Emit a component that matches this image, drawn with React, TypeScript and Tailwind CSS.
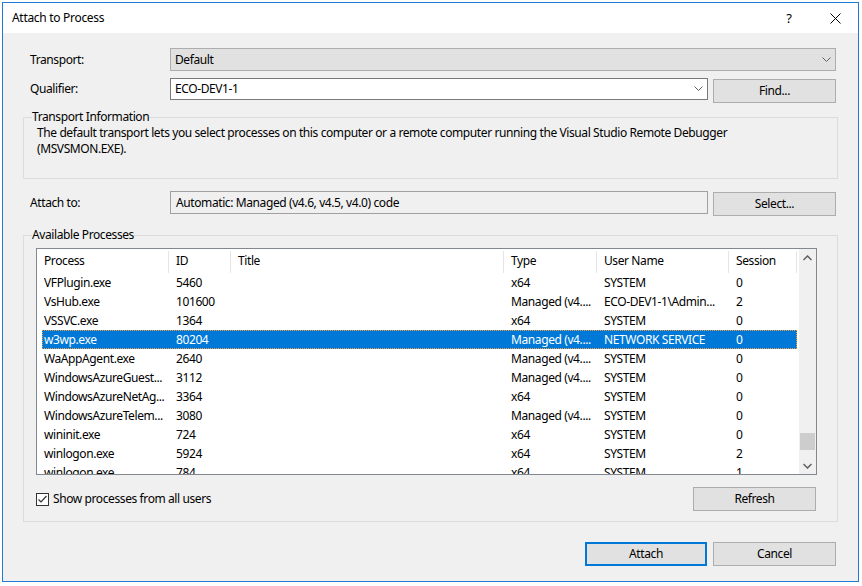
import React from 'react';

// Attach to Process dialog, Windows 10 look.

type Row = { proc: string; id: string; type: string; user: string; session: string; selected?: boolean };

const rows: Row[] = [
  { proc: 'VFPlugin.exe', id: '5460', type: 'x64', user: 'SYSTEM', session: '0' },
  { proc: 'VsHub.exe', id: '101600', type: 'Managed (v4....', user: 'ECO-DEV1-1\\Admin...', session: '2' },
  { proc: 'VSSVC.exe', id: '1364', type: 'x64', user: 'SYSTEM', session: '0' },
  { proc: 'w3wp.exe', id: '80204', type: 'Managed (v4....', user: 'NETWORK SERVICE', session: '0', selected: true },
  { proc: 'WaAppAgent.exe', id: '2640', type: 'Managed (v4....', user: 'SYSTEM', session: '0' },
  { proc: 'WindowsAzureGuest...', id: '3112', type: 'Managed (v4....', user: 'SYSTEM', session: '0' },
  { proc: 'WindowsAzureNetAg...', id: '3364', type: 'x64', user: 'SYSTEM', session: '0' },
  { proc: 'WindowsAzureTelem...', id: '3080', type: 'Managed (v4....', user: 'SYSTEM', session: '0' },
  { proc: 'wininit.exe', id: '724', type: 'x64', user: 'SYSTEM', session: '0' },
  { proc: 'winlogon.exe', id: '5924', type: 'x64', user: 'SYSTEM', session: '2' },
  // partly hidden below the list edge, as in the real dialog
  { proc: 'winlogon.exe', id: '784', type: 'x64', user: 'SYSTEM', session: '1' },
];

function Chevron({ className }: { className?: string }) {
  return (
    <svg width="9" height="6" viewBox="0 0 9 6" className={className}>
      <polyline points="0.5,0.5 4.5,4.5 8.5,0.5" fill="none" stroke="#606060" strokeWidth="1" />
    </svg>
  );
}

function Button({ children, className = '' }: { children: React.ReactNode; className?: string }) {
  return (
    <div
      className={`flex items-center justify-center h-[24px] w-[123px] bg-[#e1e1e1] border border-[#adadad] ${className}`}
    >
      {children}
    </div>
  );
}

function HeaderCell({ w, label }: { w: string; label: string }) {
  return (
    <div className={`${w} h-full flex items-center pl-[7px] relative`}>
      <span>{label}</span>
      <div className="absolute right-0 top-[2px] bottom-0 w-px bg-[#e5e5e5]" />
    </div>
  );
}

export default function App() {
  return (
    <div
      className="w-[862px] h-[586px] bg-white overflow-hidden text-[12px] text-black leading-[16px]"
      style={{ fontFamily: '"Segoe UI", "Noto Sans", sans-serif' }}
    >
      <div className="ml-[2px] mt-[2px] w-[857px] h-[580px] border border-[#1e7bd1] flex flex-col">
        {/* title bar */}
        <div className="h-[30px] bg-white flex items-center pl-[9px] shrink-0">
          <span className="tracking-[-0.3px]">Attach to Process</span>
          <span className="ml-auto mr-[38px] text-[13px]">?</span>
          <svg width="11" height="11" viewBox="0 0 11 11" className="mr-[17px]">
            <path d="M0.5 0.5 L10.5 10.5 M10.5 0.5 L0.5 10.5" stroke="#000" strokeWidth="1" />
          </svg>
        </div>

        <div className="flex-1 bg-[#f0f0f0] px-[20px] tracking-[-0.4px]">
          {/* Transport */}
          <div className="mt-[15px] flex items-center h-[23px]">
            <div className="w-[147px] pl-[7px]">Transport:</div>
            <div className="w-[666px] h-[23px] bg-[#e1e1e1] border border-[#adadad] flex items-center pl-[4px]">
              <span>Default</span>
              <Chevron className="ml-auto mr-[4px]" />
            </div>
          </div>

          {/* Qualifier */}
          <div className="mt-[7px] flex items-start h-[25px]">
            <div className="w-[147px] pl-[7px] h-[22px] flex items-center">Qualifier:</div>
            <div className="w-[538px] h-[22px] bg-white border border-[#7a7a7a] flex items-center pl-[4px]">
              <span>ECO-DEV1-1</span>
              <Chevron className="ml-auto mr-[4px]" />
            </div>
            <Button className="ml-[5px] mt-[1px]">Find...</Button>
          </div>

          {/* Transport Information */}
          <fieldset className="mt-[6px] border border-[#dcdcdc] px-[8px] pb-[21px]">
            <legend className="leading-[16px]">Transport Information</legend>
            <div className="pl-[5px]">
              The default transport lets you select processes on this computer or a remote computer running the Visual
              Studio Remote Debugger
              <br />
              (MSVSMON.EXE).
            </div>
          </fieldset>

          {/* Attach to */}
          <div className="mt-[12px] flex items-start h-[25px]">
            <div className="w-[147px] pl-[7px] h-[23px] flex items-center">Attach to:</div>
            <div className="w-[538px] h-[23px] bg-[#f0f0f0] border border-[#a0a0a0] flex items-center pl-[5px]">
              Automatic: Managed (v4.6, v4.5, v4.0) code
            </div>
            <Button className="ml-[5px] mt-[1px]">Select...</Button>
          </div>

          {/* Available Processes */}
          <fieldset className="mt-[11px] border border-[#dcdcdc] px-[8px] pb-[10px]">
            <legend className="leading-[16px]">Available Processes</legend>
            <div className="mt-[5px] ml-[4px] w-[781px] h-[227px] border border-[#828790] bg-white flex overflow-hidden">
              <div className="w-[762px] flex flex-col">
                <div className="h-[24px] flex shrink-0">
                  <HeaderCell w="w-[132px]" label="Process" />
                  <HeaderCell w="w-[62px]" label="ID" />
                  <HeaderCell w="w-[273px]" label="Title" />
                  <HeaderCell w="w-[93px]" label="Type" />
                  <HeaderCell w="w-[132px]" label="User Name" />
                  <HeaderCell w="w-[68px]" label="Session" />
                </div>
                <div className="flex-1 overflow-hidden">
                  {rows.map((r, i) => (
                    <div
                      key={i}
                      className={`ml-[5px] w-[755px] h-[19px] flex items-center ${
                        r.selected
                          ? 'bg-[#0078d7] text-white outline-1 outline-dotted outline-[#f0a040] -outline-offset-1'
                          : ''
                      }`}
                    >
                      <div className="w-[127px] pl-[2px] whitespace-nowrap">{r.proc}</div>
                      <div className="w-[62px] pl-[7px]">{r.id}</div>
                      <div className="w-[273px]" />
                      <div className="w-[93px] pl-[7px] whitespace-nowrap">{r.type}</div>
                      <div className="w-[132px] pl-[7px] whitespace-nowrap">{r.user}</div>
                      <div className="w-[68px] pl-[7px]">{r.session}</div>
                    </div>
                  ))}
                </div>
              </div>
              {/* scrollbar */}
              <div className="ml-auto w-[17px] bg-[#f0f0f0] flex flex-col">
                <div className="h-[17px] flex items-center justify-center">
                  <svg width="9" height="6" viewBox="0 0 9 6">
                    <polyline points="0.5,5 4.5,1 8.5,5" fill="none" stroke="#606060" strokeWidth="1.5" />
                  </svg>
                </div>
                <div className="flex-1" />
                <div className="h-[17px] mx-[1px] bg-[#cdcdcd]" />
                <div className="h-[7px]" />
                <div className="h-[17px] flex items-center justify-center">
                  <svg width="9" height="6" viewBox="0 0 9 6">
                    <polyline points="0.5,1 4.5,5 8.5,1" fill="none" stroke="#606060" strokeWidth="1.5" />
                  </svg>
                </div>
              </div>
            </div>

            <div className="mt-[12px] flex items-center justify-between h-[24px]">
              <div className="ml-[4px] flex items-center">
                <svg width="13" height="13" viewBox="0 0 13 13">
                  <rect x="0.5" y="0.5" width="12" height="12" fill="#fff" stroke="#333" />
                  <polyline points="2.5,6.5 5,9 10.5,3" fill="none" stroke="#333" strokeWidth="1.2" />
                </svg>
                <span className="ml-[4px]">Show processes from all users</span>
              </div>
              <Button className="mr-[13px]">Refresh</Button>
            </div>
          </fieldset>

          {/* dialog buttons */}
          <div className="mt-[20px] flex justify-end gap-[6px] mr-[2px]">
            <div className="flex items-center justify-center h-[24px] w-[122px] bg-[#e1e1e1] border-2 border-[#0078d7]">
              Attach
            </div>
            <Button className="w-[122px]">Cancel</Button>
          </div>
        </div>
      </div>
    </div>
  );
}
